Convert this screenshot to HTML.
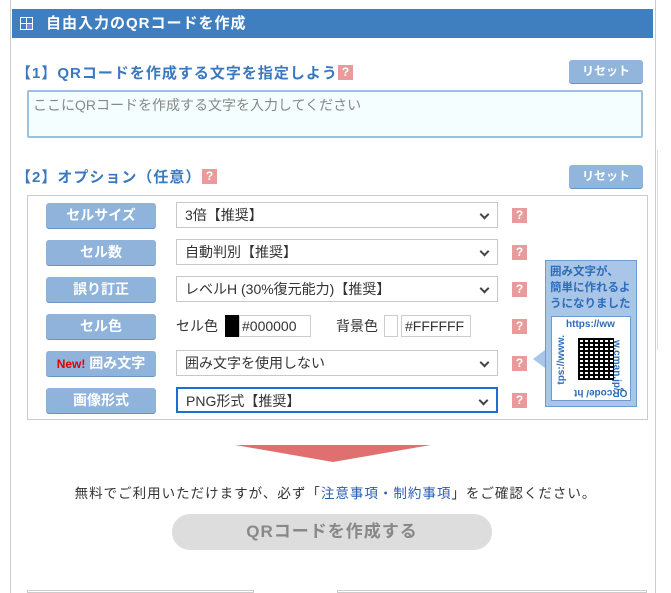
<!DOCTYPE html>
<html><head><meta charset="utf-8"><style>
*{box-sizing:border-box;margin:0;padding:0}
body{width:671px;height:593px;overflow:hidden;background:#fff;font-family:"Liberation Sans","Noto Sans CJK JP",sans-serif;position:relative}
.a{position:absolute}
.hd{left:12px;top:9px;width:641px;height:29px;background:#3f7fbf;color:#fff;font-weight:bold;font-size:15px;line-height:29px;padding-left:34px;letter-spacing:1px}
.ttl{color:#3a78c0;font-weight:bold;font-size:15px;letter-spacing:1px}
.rs{width:74px;height:23px;background:#92b5dc;border-radius:3px;color:#fff;font-weight:bold;font-size:12px;text-align:center;line-height:23px;box-shadow:0 1px 0 #6b93c0}
.q{width:15px;height:15px;background:#e99a9a;color:#fff;font-weight:bold;font-size:12px;text-align:center;line-height:15px}
.lb{left:46px;width:110px;height:25px;background:#8fb3db;border-radius:3px;color:#fff;font-weight:bold;font-size:14px;text-align:center;line-height:25px;box-shadow:0 1px 0 #6b93c0}
.sel{left:176px;width:322px;height:26px;border:1px solid #c8c8c8;font-size:14px;line-height:24px;padding-left:8px;color:#333}
.sel:after{content:"";position:absolute;right:9px;top:8px;width:5px;height:5px;border-right:2px solid #444;border-bottom:2px solid #444;transform:rotate(45deg)}
</style></head><body>
<div class="a" style="left:10px;top:0;width:1px;height:593px;background:#ccc"></div>
<div class="a" style="left:655px;top:0;width:1px;height:593px;background:#ccc"></div>
<div class="a" style="left:657px;top:150px;width:1px;height:200px;background:#ddd"></div>
<div class="a hd">自由入力のQRコードを作成</div>
<div class="a" style="left:20px;top:17px;width:13px;height:13px;background:#fff;padding:1px;display:grid;grid-template-columns:1fr 1fr;gap:1px"><i style="background:#3f7fbf"></i><i style="background:#3f7fbf"></i><i style="background:#3f7fbf"></i><i style="background:#8a7fe0"></i></div>
<div class="a ttl" style="left:16px;top:62px">【1】QRコードを作成する文字を指定しよう</div>
<div class="a q" style="left:338px;top:65px">?</div>
<div class="a rs" style="left:569px;top:60px">リセット</div>
<div class="a" style="left:27px;top:90px;width:616px;height:48px;background:#f4feff;border:2px solid #9ec0e0;border-radius:2px;color:#888;font-size:14px;padding:3px 4px">ここにQRコードを作成する文字を入力してください</div>
<div class="a ttl" style="left:16px;top:166px">【2】オプション（任意）</div>
<div class="a q" style="left:202px;top:169px">?</div>
<div class="a rs" style="left:569px;top:165px">リセット</div>
<div class="a" style="left:27px;top:195px;width:621px;height:225px;border:1px solid #ccc"></div>
<div class="a lb" style="top:203px">セルサイズ</div>
<div class="a sel" style="top:202px">3倍【推奨】</div>
<div class="a lb" style="top:240px">セル数</div>
<div class="a sel" style="top:239px">自動判別【推奨】</div>
<div class="a lb" style="top:277px">誤り訂正</div>
<div class="a sel" style="top:276px">レベルH (30%復元能力)【推奨】</div>
<div class="a lb" style="top:314px">セル色</div>
<div class="a" style="left:176px;top:316px;font-size:14px;color:#333">セル色</div>
<div class="a" style="left:225px;top:315px;width:14px;height:22px;background:#000"></div>
<div class="a" style="left:239px;top:315px;width:72px;height:22px;border:1px solid #ccc;font-size:14px;line-height:20px;padding-left:2px;color:#333">#000000</div>
<div class="a" style="left:336px;top:316px;font-size:14px;color:#333">背景色</div>
<div class="a" style="left:384px;top:315px;width:14px;height:22px;border:1px solid #ccc"></div>
<div class="a" style="left:401px;top:315px;width:70px;height:22px;border:1px solid #ccc;font-size:14px;line-height:20px;padding-left:3px;color:#333">#FFFFFF</div>
<div class="a lb" style="top:351px"><span style="color:#e00000;font-size:12px">New!</span> 囲み文字</div>
<div class="a sel" style="top:350px">囲み文字を使用しない</div>
<div class="a lb" style="top:388px">画像形式</div>
<div class="a sel" style="top:387px;border:2px solid #1a6fd0">PNG形式【推奨】</div>
<div class="a q" style="left:512px;top:208px">?</div>
<div class="a q" style="left:512px;top:245px">?</div>
<div class="a q" style="left:512px;top:282px">?</div>
<div class="a q" style="left:512px;top:319px">?</div>
<div class="a q" style="left:512px;top:356px">?</div>
<div class="a q" style="left:512px;top:393px">?</div>
<div class="a" style="left:545px;top:260px;width:92px;height:147px;background:#a9c6e8;border:1px solid #6d9ad0;padding:3px 4px;color:#2d6cb8;font-weight:bold;font-size:11.5px;line-height:16px;white-space:nowrap">囲み文字が、<br>簡単に作れるよ<br>うになりました</div>
<div class="a" style="left:533px;top:350px;width:0;height:0;border-top:9px solid transparent;border-bottom:9px solid transparent;border-right:12px solid #a9c6e8"></div>
<div class="a" style="left:551px;top:316px;width:80px;height:85px;background:#fff;border:1px solid #6d9ad0"></div>
<div class="a" style="left:566px;top:319px;font-size:10px;font-weight:bold;color:#2d6cb8">https://ww</div>
<div class="a" style="left:611px;top:340px;font-size:10px;font-weight:bold;color:#2d6cb8;writing-mode:vertical-rl">w.cman.jp/</div>
<div class="a" style="left:556px;top:335px;font-size:10px;font-weight:bold;color:#2d6cb8;writing-mode:vertical-rl;transform:rotate(180deg)">tps://www.</div>
<div class="a" style="left:574px;top:387px;font-size:10px;font-weight:bold;color:#2d6cb8;transform:rotate(180deg)">QRcode/ ht</div>
<div class="a" style="left:578px;top:338px;width:36px;height:42px;background:repeating-linear-gradient(90deg,#000 0 2px,transparent 2px 5px),repeating-linear-gradient(0deg,#000 0 2px,#fff 2px 4px);"></div>
<div class="a" style="left:235px;top:445px;width:0;height:0;border-left:98px solid transparent;border-right:98px solid transparent;border-top:17px solid #e07070"></div>
<div class="a" style="left:0;width:671px;top:482px;text-align:center;font-size:13.5px;letter-spacing:1px;color:#333">無料でご利用いただけますが、必ず「<span style="color:#2a5cb0">注意事項・制約事項</span>」をご確認ください。</div>
<div class="a" style="left:172px;top:514px;width:320px;height:36px;background:#ddd;border-radius:18px;color:#888;font-weight:bold;font-size:17px;text-align:center;line-height:36px;letter-spacing:1px">QRコードを作成する</div>
<div class="a" style="left:27px;top:590px;width:227px;height:3px;border:1px solid #ccc"></div>
<div class="a" style="left:337px;top:590px;width:310px;height:3px;border:1px solid #ccc"></div>
</body></html>
